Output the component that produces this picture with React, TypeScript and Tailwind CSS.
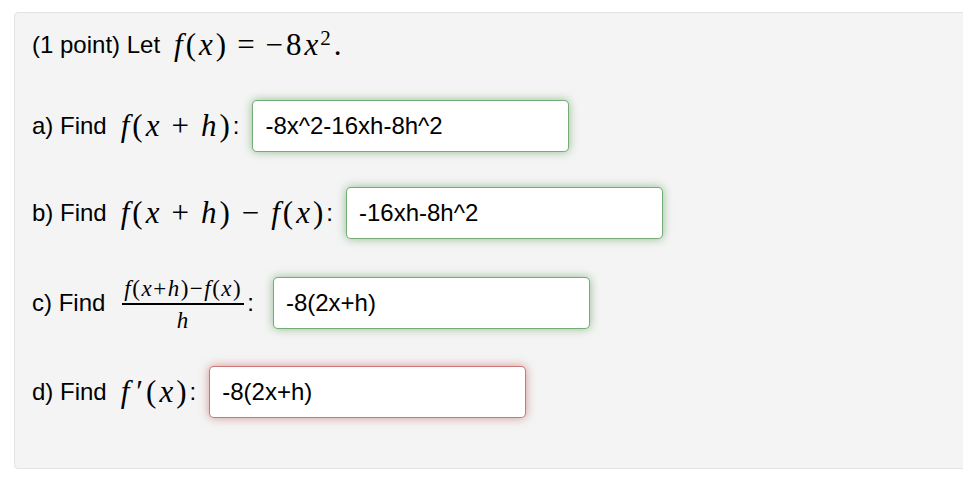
import React from "react";

const M = "font-['Liberation_Serif',serif] tracking-[3px]";

function I({ children }: { children: React.ReactNode }) {
  return <span className="italic">{children}</span>;
}

function Input({ value, ok }: { value: string; ok: boolean }) {
  return (
    <div
      className={
        "ml-[13px] w-[317px] h-[52px] flex items-center pl-[12px] bg-white rounded-[5px] border text-[24px] text-black " +
        (ok
          ? "border-[rgba(81,153,81,0.8)] shadow-[0_0_10px_rgba(81,153,81,0.6)]"
          : "border-[rgba(191,84,84,0.8)] shadow-[0_0_10px_rgba(191,84,84,0.6)]")
      }
    >
      {value}
    </div>
  );
}

export default function App() {
  return (
    <div className="w-[963px] h-[504px] overflow-hidden bg-white font-['Liberation_Sans',Arial,sans-serif] text-black">
      <div className="ml-[14px] mt-[12px] w-[960px] bg-[#f4f4f4] border border-[#e3e3e3] rounded-[4px] pl-[17px] pt-[17px] pb-[50px]">
        <div className="h-[30px] flex items-center text-[24px]">
          <span>(1 point) Let</span>
          <span className={M + " ml-[14px] text-[31px] whitespace-pre"}>
            <I>f</I>(<I>x</I>)<span className="mx-[8px]">=</span>−8<I>x</I>
            <sup className="text-[21px] relative top-[-10px] ml-[-1px]">2</sup>.
          </span>
        </div>

        <div className="mt-[40px] h-[52px] flex items-center text-[24px]">
          <span>a) Find</span>
          <span className={M + " ml-[14px] text-[31px] whitespace-pre"}>
            <I>f</I>(<I>x</I>
            <span className="mx-[9px]">+</span>
            <I>h</I>)
          </span>
          <span>:</span>
          <Input value="-8x^2-16xh-8h^2" ok />
        </div>

        <div className="mt-[35px] h-[52px] flex items-center text-[24px]">
          <span>b) Find</span>
          <span className={M + " ml-[14px] text-[31px] whitespace-pre"}>
            <I>f</I>(<I>x</I>
            <span className="mx-[9px]">+</span>
            <I>h</I>)<span className="mx-[9px]">−</span>
            <I>f</I>(<I>x</I>)
          </span>
          <span>:</span>
          <Input value="-16xh-8h^2" ok />
        </div>

        <div className="mt-[38px] h-[52px] flex items-center text-[24px]">
          <span>c) Find</span>
          <span className={"font-['Liberation_Serif',serif] tracking-[1.5px] ml-[17px] inline-flex flex-col items-center text-[23px] leading-none pt-[2px]"}>
            <span className="px-[2px] pb-[3px]">
              <I>f</I>(<I>x</I>+<I>h</I>)−<I>f</I>(<I>x</I>)
            </span>
            <span className="self-stretch h-[2px] bg-black" />
            <span className="pt-[4px]">
              <I>h</I>
            </span>
          </span>
          <span className="ml-[3px]">:</span>
          <span className="ml-[6px]" />
          <Input value="-8(2x+h)" ok />
        </div>

        <div className="mt-[37px] h-[52px] flex items-center text-[24px]">
          <span>d) Find</span>
          <span className={M + " ml-[14px] text-[31px] whitespace-pre"}>
            <I>f</I>
            <span className="ml-[4px]">′</span>(<I>x</I>)
          </span>
          <span>:</span>
          <Input value="-8(2x+h)" ok={false} />
        </div>
      </div>
    </div>
  );
}
